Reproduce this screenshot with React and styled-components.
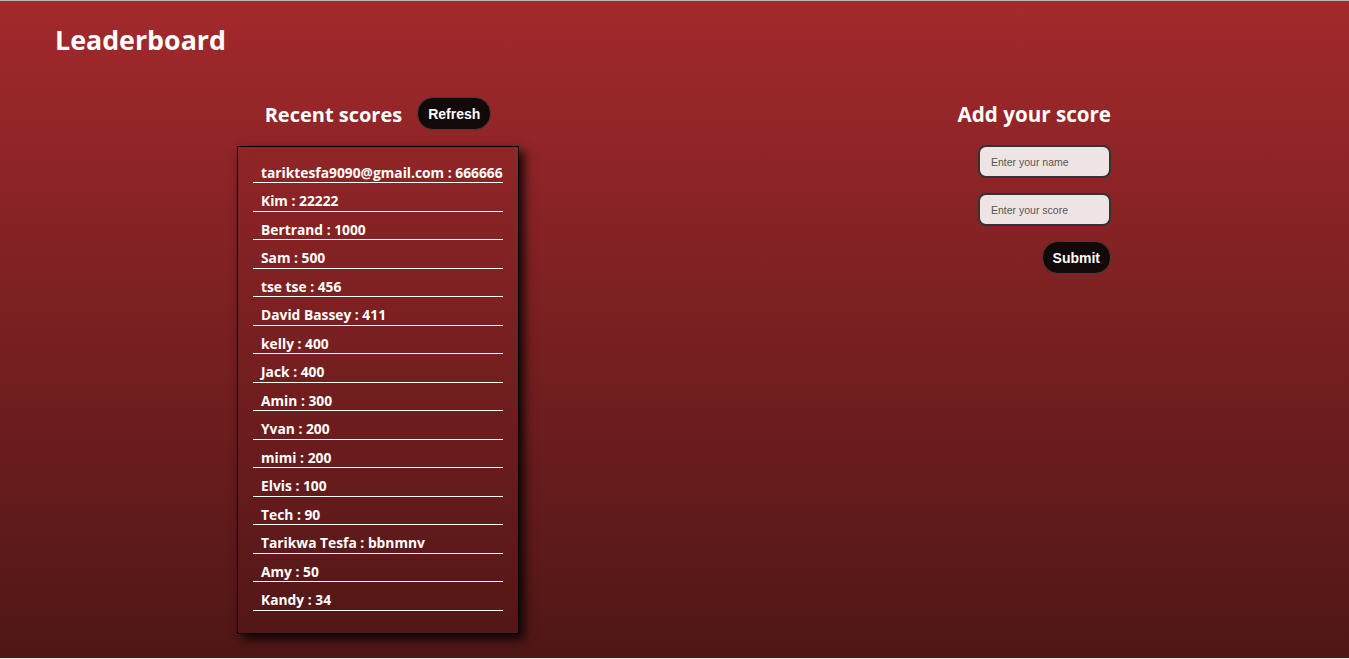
import styled, { createGlobalStyle } from "styled-components";

const GlobalStyle = createGlobalStyle`
  html, body {
    margin: 0;
    padding: 0;
    background: #dce8ef;
  }
  * {
    box-sizing: border-box;
  }
`;

const scores = [
  { user: "tariktesfa9090@gmail.com", score: "666666" },
  { user: "Kim", score: "22222" },
  { user: "Bertrand", score: "1000" },
  { user: "Sam", score: "500" },
  { user: "tse tse", score: "456" },
  { user: "David Bassey", score: "411" },
  { user: "kelly", score: "400" },
  { user: "Jack", score: "400" },
  { user: "Amin", score: "300" },
  { user: "Yvan", score: "200" },
  { user: "mimi", score: "200" },
  { user: "Elvis", score: "100" },
  { user: "Tech", score: "90" },
  { user: "Tarikwa Tesfa", score: "bbnmnv" },
  { user: "Amy", score: "50" },
  { user: "Kandy", score: "34" },
];

const Page = styled.div`
  height: 658px;
  border-top: 1px solid #b9b9b9;
  background: linear-gradient(180deg, #a3292c 0%, #4f1616 100%);
  color: #fff;
  font-family: "Open Sans", "Noto Sans", sans-serif;
`;

const Title = styled.h1`
  margin: 0;
  padding: 19px 0 0 55px;
  font-size: 26.8px;
  font-weight: 700;
  line-height: 40px;
`;

const Main = styled.main`
  display: flex;
  justify-content: space-between;
  align-items: flex-start;
  padding: 37px 238px 0 237px;
`;

const Column = styled.section`
  display: flex;
  flex-direction: column;
  align-items: ${(p) => (p.$right ? "flex-end" : "center")};
  gap: ${(p) => (p.$right ? "15px" : "16px")};
`;

const HeadRow = styled.div`
  display: flex;
  align-items: center;
  gap: 15px;
  height: 33px;
`;

const Heading = styled.h2`
  margin: 0;
  font-size: ${(p) => (p.$wide ? "20.6px" : "20px")};
  font-weight: 700;
  padding-top: 1px;
`;

const Button = styled.button`
  height: 33px;
  padding: 0 10px;
  border: 1px solid #4a3a3a;
  border-radius: 16px;
  background: #120909;
  color: #fff;
  font-family: "Liberation Sans", Arial, sans-serif;
  font-size: 14px;
  font-weight: 700;
  cursor: pointer;
`;

const ScoreBox = styled.ul`
  width: 282px;
  margin: 0;
  padding: 7.5px 15px 22px;
  list-style: none;
  border: 1px solid #000;
  box-shadow: 5px 5px 10px rgba(0, 0, 0, 0.85);
`;

const ScoreItem = styled.li`
  height: 28.5px;
  padding: 9px 8px 0;
  font-size: 13.8px;
  font-weight: 700;
  line-height: 18.5px;
  border-bottom: 1px solid #fff;
  white-space: nowrap;
`;

const Form = styled.form`
  display: flex;
  flex-direction: column;
  align-items: flex-end;
  gap: 15px;
`;

const Input = styled.input`
  width: 133px;
  height: 33px;
  padding: 0 11px;
  border: 2px solid #333;
  border-radius: 8px;
  background: #efe4e4;
  font-family: "Liberation Sans", Arial, sans-serif;
  font-size: 10.5px;
  color: #333;
  outline: none;
  &::placeholder {
    color: #555;
  }
`;

export default function App() {
  return (
    <>
      <GlobalStyle />
      <Page>
        <Title>Leaderboard</Title>
        <Main>
          <Column>
            <HeadRow>
              <Heading>Recent scores</Heading>
              <Button type="button">Refresh</Button>
            </HeadRow>
            <ScoreBox>
              {scores.map((s, i) => (
                <ScoreItem key={i}>
                  {s.user} : {s.score}
                </ScoreItem>
              ))}
            </ScoreBox>
          </Column>
          <Column $right>
            <HeadRow>
              <Heading $wide>Add your score</Heading>
            </HeadRow>
            <Form onSubmit={(e) => e.preventDefault()}>
              <Input type="text" placeholder="Enter your name" />
              <Input type="text" placeholder="Enter your score" />
              <Button type="submit">Submit</Button>
            </Form>
          </Column>
        </Main>
      </Page>
    </>
  );
}
